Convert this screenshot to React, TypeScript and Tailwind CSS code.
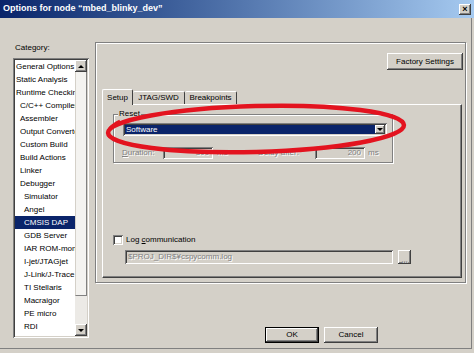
const sunken =
  "shadow-[inset_1px_1px_0_#808080,inset_-1px_-1px_0_#ffffff,inset_2px_2px_0_#404040,inset_-2px_-2px_0_#d4d0c8]";
const raised =
  "shadow-[inset_-1px_-1px_0_#404040,inset_1px_1px_0_#ffffff,inset_-2px_-2px_0_#808080,inset_2px_2px_0_#d4d0c8]";
const etched = "border border-[#808080] shadow-[inset_1px_1px_0_#ffffff,1px_1px_0_#ffffff]";
const disabled = "text-[#808080] [text-shadow:1px_1px_0_#ffffff]";

const categories: [string, number][] = [
  ["General Options", 0],
  ["Static Analysis", 0],
  ["Runtime Checking", 0],
  ["C/C++ Compiler", 1],
  ["Assembler", 1],
  ["Output Converter", 1],
  ["Custom Build", 1],
  ["Build Actions", 1],
  ["Linker", 1],
  ["Debugger", 1],
  ["Simulator", 2],
  ["Angel", 2],
  ["CMSIS DAP", 2],
  ["GDB Server", 2],
  ["IAR ROM-monitor", 2],
  ["I-jet/JTAGjet", 2],
  ["J-Link/J-Trace", 2],
  ["TI Stellaris", 2],
  ["Macraigor", 2],
  ["PE micro", 2],
  ["RDI", 2],
  ["ST-LINK", 2],
];

const indent = ["pl-[1px]", "pl-[5px]", "pl-[9px]"];

function ArrowUp() {
  return <div className="h-0 w-0 border-x-[3px] border-b-[3px] border-x-transparent border-b-black" />;
}

function ArrowDown() {
  return <div className="h-0 w-0 border-x-[3px] border-t-[3px] border-x-transparent border-t-black" />;
}

function CategoryList() {
  return (
    <div className={`flex h-[280px] w-[76px] bg-white p-[2px] ${sunken}`}>
      <div className="w-[60px] overflow-hidden">
        {categories.map(([name, level]) => (
          <div
            key={name}
            className={`h-[13px] whitespace-nowrap leading-[13px] ${indent[level]} ${
              name === "CMSIS DAP" ? "bg-[#0a246a] text-white" : ""
            }`}
          >
            {name}
          </div>
        ))}
      </div>
      <div className="flex w-[12px] flex-col">
        <div className={`flex h-[12px] items-center justify-center bg-[#d4d0c8] ${raised}`}>
          <ArrowUp />
        </div>
        <div className="h-[224px] border-b border-r border-[#808080] border-l border-l-[#d4d0c8] bg-[#f4f3f0]" />
        <div className="flex-1 bg-[#eceae6]" />
        <div className={`flex h-[12px] items-center justify-center bg-[#d4d0c8] ${raised}`}>
          <ArrowDown />
        </div>
      </div>
    </div>
  );
}

function Button({ label, className }: { label: string; className: string }) {
  return (
    <div className={`flex items-center justify-center bg-[#d4d0c8] ${raised} ${className}`}>{label}</div>
  );
}

function Field({ value }: { value: string }) {
  return (
    <div className={`flex h-[12px] w-[50px] items-center justify-end pr-[4px] ${disabled} ${sunken}`}>
      {value}
    </div>
  );
}

function SetupPage() {
  return (
    <div className="ml-[6px] flex h-[174px] w-[360px] flex-col border-l border-t border-white border-b-[#404040] border-r-[#404040] border-b border-r shadow-[inset_-1px_-1px_0_#808080]">
      <div className={`relative ml-[10px] mt-[9px] h-[49px] w-[280px] ${etched}`}>
        <span className="absolute -top-[6px] left-[4px] bg-[#d4d0c8] px-[1px] leading-[10px]">Reset</span>
        <div className={`ml-[9px] mt-[8px] flex h-[13px] w-[264px] bg-white p-[2px] ${sunken}`}>
          <div className="flex flex-1 items-center bg-[#0a246a] pl-[1px] text-white">Software</div>
          <div className={`flex w-[10px] items-center justify-center bg-[#d4d0c8] ${raised}`}>
            <ArrowDown />
          </div>
        </div>
        <div className="mt-[11px] flex h-[12px] items-center pl-[8px]">
          <span className={`w-[41px] ${disabled}`}>
            <u>D</u>uration:
          </span>
          <Field value="300" />
          <span className={`ml-[4px] w-[41px] ${disabled}`}>ms</span>
          <span className={`w-[57px] ${disabled}`}>Delay after:</span>
          <Field value="200" />
          <span className={`ml-[3px] ${disabled}`}>ms</span>
        </div>
      </div>
      <div className="ml-[10px] mt-[71px] flex items-center">
        <div className={`h-[10px] w-[10px] bg-white ${sunken}`} />
        <span className="ml-[3px]">
          Log <u>c</u>ommunication
        </span>
      </div>
      <div className="mt-[4px] flex">
        <div className={`ml-[22px] flex h-[14px] w-[268px] items-center pl-[3px] ${disabled} ${sunken}`}>
          $PROJ_DIR$¥cspycomm.log
        </div>
        <div className={`ml-[5px] flex h-[14px] w-[13px] items-end justify-center bg-[#d4d0c8] ${raised} ${disabled}`}>
          <span className="leading-[9px]">...</span>
        </div>
      </div>
    </div>
  );
}

export default function App() {
  return (
    <div className="relative h-[353px] w-[474px] overflow-hidden bg-[#d4d0c8] font-['Liberation_Sans',Arial,sans-serif] text-[8px] text-black">
      <div className="flex h-[18px] items-center justify-between bg-gradient-to-r from-[#0a246a] to-[#a6caf0] pl-[3px] pr-[3px]">
        <span className="text-[9px] font-bold text-white">Options for node “mbed_blinky_dev”</span>
        <div className={`flex h-[11px] w-[12px] items-center justify-center bg-[#d4d0c8] text-[9px] font-bold leading-none ${raised}`}>
          ×
        </div>
      </div>
      <div className="flex h-[331px] w-[472px] items-start border-b border-r border-[#808080]">
        <div className="ml-[13px] flex flex-col">
          <span className="mt-[25px] h-[10px] pl-[2px] leading-[10px]">Category:</span>
          <div className="mt-[5px]">
            <CategoryList />
          </div>
        </div>
        <div className="ml-[6px] mt-[24px] flex flex-col">
          <div className={`flex h-[241px] w-[371px] flex-col ${etched}`}>
            <div className="flex justify-end pr-[2px] pt-[10px]">
              <Button label="Factory Settings" className="h-[17px] w-[76px]" />
            </div>
            <div className="ml-[6px] mt-[19px] flex h-[15px] items-end">
              <div className="relative z-10 -mb-[1px] flex h-[16px] w-[31px] items-center justify-center rounded-t-[2px] border-l border-r border-t border-white border-r-[#404040] bg-[#d4d0c8]">
                Setup
              </div>
              <div className="flex h-[13px] w-[52px] items-center justify-center rounded-t-[2px] border-r border-t border-white border-r-[#404040]">
                JTAG/SWD
              </div>
              <div className="flex h-[13px] w-[52px] items-center justify-center rounded-t-[2px] border-r border-t border-white border-r-[#404040]">
                Breakpoints
              </div>
            </div>
            <SetupPage />
          </div>
          <div className="mt-[44px] flex gap-[5px] pl-[170px]">
            <div className="border border-black">
              <Button label="OK" className="h-[14px] w-[52px]" />
            </div>
            <Button label="Cancel" className="h-[16px] w-[54px]" />
          </div>
        </div>
      </div>
      <svg className="pointer-events-none absolute left-0 top-0" width="474" height="353" viewBox="0 0 474 353">
        <ellipse
          cx="256"
          cy="129"
          rx="148"
          ry="23"
          transform="rotate(-1.5 256 129)"
          fill="none"
          stroke="#e3131f"
          strokeWidth="4.5"
        />
        <path d="M120 121 C 112 125, 105 130, 110 137" fill="none" stroke="#e3131f" strokeWidth="3" />
      </svg>
    </div>
  );
}
